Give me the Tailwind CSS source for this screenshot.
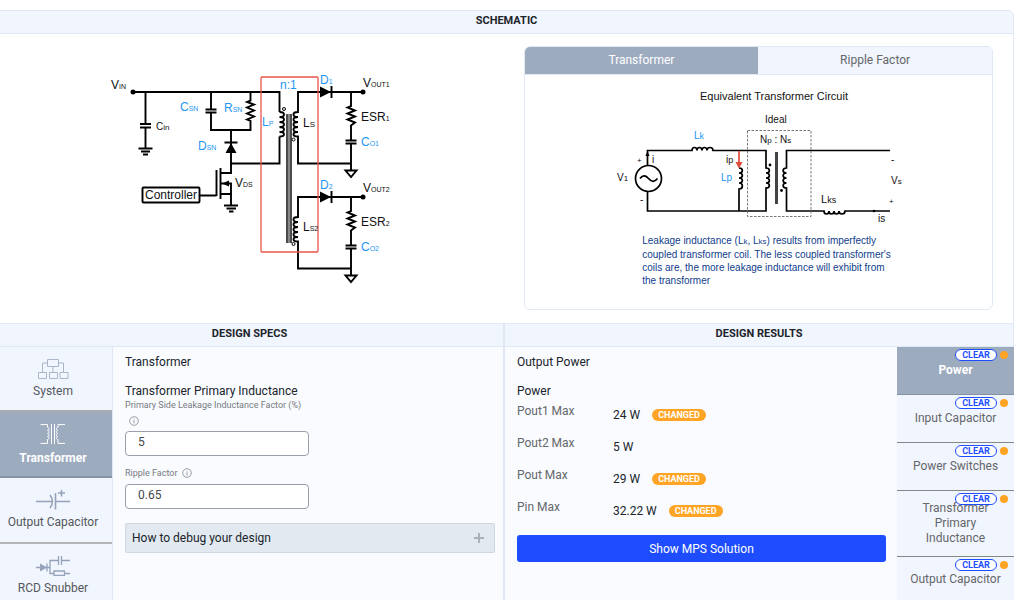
<!DOCTYPE html>
<html lang="en">

<head>
    <meta charset="UTF-8">
    <meta name="viewport" content="width=device-width, initial-scale=1.0">
    <title>Flyback Designer</title>
    <script src="https://cdn.jsdelivr.net/npm/@tailwindcss/browser@4"></script>
</head>

<body class="bg-white font-['Roboto','Liberation_Sans',sans-serif] text-xs text-[#20242b]">

<main class="flex min-h-screen flex-col pt-2.5 pr-[21px]">

    <!-- Schematic -->
    <section class="rounded-tr-md border-t border-r border-[#dfe8f4]">
        <h2 class="rounded-tr-md border-b border-[#dfe8f4] bg-[#f1f5fd] text-center text-[11px] leading-5 font-bold pb-0.5">SCHEMATIC</h2>
        <div class="grid grid-cols-2">
            <div class="flex items-center justify-center">
                <svg class="w-[302px]" viewBox="102 66 302 225" fill="none" stroke="#000" stroke-width="1.9" font-family="Liberation Sans, Arial, sans-serif">
                    <!-- input side -->
                    <path d="M133 92H279.500V112M145.500 92V124M140 124H151M140 127.500H151M145.500 128V148M138.500 148.500H152.500M141 151.500H150M143 154.500H148"/>
                    <path d="M211 92V109M205.500 109.500H216.500M205.500 112.500H216.500M211 113V130H250.500V121L247 119.500L254 116.500L247 113.500L254 110.500L247 107.500L254 104.500L247 102L250.500 100.500V92"/>
                    <path d="M231 130V173H220.500M224.500 142.500H237.500M231 163.500H279.500V136.500M220.500 168V199M216.500 170V196M199.500 195.500H216.500M221 183.500H231V205M220.500 194H231M224 205.500H238M226.500 208.500H236M229 211.500H233.500"/>
                    <path d="M231 143L236.500 153H225.500ZM222 183.500L229 180.500V186.500Z" fill="#000" stroke="none"/>
                    <rect x="142.500" y="187.500" width="57" height="15" rx="1"/>
                    <!-- windings -->
                    <path d="M279.500 112c6 0 6 5 0 5c6 0 6 5 0 5c6 0 6 5 0 5c6 0 6 5 0 5c6 0 6 4.500 0 4.500"/>
                    <path d="M320 92H298V112c-6 0 -6 5 0 5c-6 0 -6 5 0 5c-6 0 -6 5 0 5c-6 0 -6 5 0 5c-6 0 -6 4.500 0 4.500V163.500H351"/>
                    <path d="M320 197H298V217c-6 0 -6 5 0 5c-6 0 -6 5 0 5c-6 0 -6 5 0 5c-6 0 -6 5 0 5c-6 0 -6 4.500 0 4.500V268.500H351"/>
                    <path d="M289 114V243" stroke="#888" stroke-width="2"/>
                    <path d="M287 114V243M291 114V243" stroke-width="1.400"/>
                    <g stroke-width="1">
                        <circle cx="284" cy="109" r="1.500"/>
                        <circle cx="293.500" cy="139.500" r="1.500"/>
                        <circle cx="293.500" cy="244" r="1.500"/>
                    </g>
                    <!-- outputs -->
                    <g id="output">
                        <path d="M320 92H363M331.500 86V98M351 92V106L347.500 107.500L355 110.500L347.500 113.500L355 116.500L347.500 119.500L355 122.500L351 125.500V140M345.500 140.500H356.500M345.500 143.500H356.500M351 144V170M345.500 170.500H356.500L351 177Z"/>
                        <path d="M320 86.500L331 92L320 97.500Z" fill="#000" stroke="none"/>
                        <circle cx="363" cy="92" r="2.500" fill="#000" stroke="none"/>
                    </g>
                    <use href="#output" y="105"/>
                    <circle cx="133" cy="92" r="2.500" fill="#000" stroke="none"/>
                    <rect x="261" y="77" width="57" height="175" rx="1" stroke="#e8564a" stroke-width="1.300"/>

                    <g fill="#111" stroke="none" font-size="12">
                        <text x="111" y="89">V<tspan font-size="7">IN</tspan></text>
                        <text x="156" y="130" font-size="10">C<tspan font-size="8">in</tspan></text>
                        <text x="235" y="187">V<tspan font-size="7">DS</tspan></text>
                        <text x="145" y="199">Controller</text>
                        <text x="303" y="127">L<tspan font-size="8">S</tspan></text>
                        <text x="303" y="231">L<tspan font-size="7">S2</tspan></text>
                        <text x="363" y="87">V<tspan font-size="7">OUT1</tspan></text>
                        <text x="363" y="192">V<tspan font-size="7">OUT2</tspan></text>
                        <text x="361" y="121">ESR<tspan font-size="7">1</tspan></text>
                        <text x="361" y="226">ESR<tspan font-size="7">2</tspan></text>
                    </g>
                    <g fill="#1e96f5" stroke="none" font-size="12">
                        <text x="180" y="111">C<tspan font-size="7">SN</tspan></text>
                        <text x="224" y="112">R<tspan font-size="7">SN</tspan></text>
                        <text x="198" y="150">D<tspan font-size="7">SN</tspan></text>
                        <text x="262" y="126">L<tspan font-size="7">P</tspan></text>
                        <text x="280" y="89">n:1</text>
                        <text x="320" y="84">D<tspan font-size="7">1</tspan></text>
                        <text x="320" y="189">D<tspan font-size="7">2</tspan></text>
                        <text x="361" y="146">C<tspan font-size="7">O1</tspan></text>
                        <text x="361" y="251">C<tspan font-size="7">O2</tspan></text>
                    </g>
                </svg>
            </div>

            <div class="mt-3 mr-5 mb-[13px] ml-[17px] overflow-hidden rounded-md border border-[#dfe8f4]">
                <div class="grid grid-cols-2 border-b border-[#dfe8f4]" role="tablist">
                    <button role="tab" aria-selected="true" class="bg-[#9dabbf] leading-[27px] text-white">Transformer</button>
                    <button role="tab" aria-selected="false" class="bg-[#f1f5fd] leading-[27px] text-[#65676b]">Ripple Factor</button>
                </div>
                <div class="flex flex-col items-center pt-2.5 pb-[22px]">
                    <svg class="w-[300px]" viewBox="609 85 300 149" fill="none" stroke="#000" stroke-width="1.700" font-family="Liberation Sans, Arial, sans-serif">
                        <path d="M648.500 165V150.500H693c0 -4 5 -4 5 0c0 -4 5 -4 5 0c0 -4 5 -4 5 0c0 -4 6 -4 6 0H767V168c4.500 0 4.500 5 0 5c4.500 0 4.500 5 0 5c4.500 0 4.500 5 0 5c4.500 0 4.500 5 0 5V211H648.500V192"/>
                        <circle cx="649.500" cy="178.500" r="13"/>
                        <path d="M641 178.500c3 -4 6 -3 8.500 0c3 3.500 6 4 9 0"/>
                        <path d="M648.500 151L650.500 156H646.500Z" fill="#000" stroke="none"/>
                        <path d="M740 168c4.500 0 4.500 5 0 5c4.500 0 4.500 5 0 5c4.500 0 4.500 5 0 5c4.500 0 4.500 6 0 6V211"/>
                        <path d="M891 150.500H787.500V168c-4.500 0 -4.500 5 0 5c-4.500 0 -4.500 5 0 5c-4.500 0 -4.500 5 0 5c-4.500 0 -4.500 5 0 5V211H825c0 4 5 4 5 0c0 4 5 4 5 0c0 4 5 4 5 0c0 4 6 4 6 0H891"/>
                        <path d="M777.500 152V204" stroke="#444" stroke-width="3"/>
                        <path d="M740 151V164" stroke="#e04a3a"/>
                        <path d="M736.500 162H743.500L740 168.500Z" fill="#e04a3a" stroke="none"/>
                        <circle cx="771" cy="165" r="1.400" fill="#000" stroke="none"/>
                        <circle cx="782.500" cy="190.500" r="1.400" fill="#000" stroke="none"/>
                        <circle cx="875" cy="211" r="1.300" fill="#000" stroke="none"/>
                        <rect x="748.500" y="130.500" width="63.500" height="86" stroke="#777" stroke-width="1" stroke-dasharray="2.500 1.500"/>
                        <g fill="#111" stroke="none" font-size="10">
                            <text x="701" y="100" font-size="11">Equivalent Transformer Circuit</text>
                            <text x="766" y="123">Ideal</text>
                            <text x="761" y="143">N<tspan font-size="8">p</tspan> : N<tspan font-size="8">s</tspan></text>
                            <text x="618" y="181">V<tspan font-size="8">1</tspan></text>
                            <text x="638" y="163" font-size="8">+</text>
                            <text x="653" y="163">i</text>
                            <text x="641" y="203">-</text>
                            <text x="727" y="163">i<tspan font-size="9">p</tspan></text>
                            <text x="892" y="163">-</text>
                            <text x="892" y="184">V<tspan font-size="8">s</tspan></text>
                            <text x="890" y="204" font-size="8">+</text>
                            <text x="822" y="203" font-size="11">L<tspan font-size="9">ks</tspan></text>
                            <text x="879" y="222">is</text>
                        </g>
                        <g fill="#1e96f5" stroke="none" font-size="10">
                            <text x="695" y="139">L<tspan font-size="9">k</tspan></text>
                            <text x="722" y="181">L<tspan font-size="10">p</tspan></text>
                        </g>
                    </svg>
                    <p class="ml-6 w-64 font-['Liberation_Sans',sans-serif] text-[10px] leading-[13px] whitespace-nowrap text-[#10408c]">
                        Leakage inductance (L<span class="text-[8px]">k</span>, L<span class="text-[8px]">ks</span>) results from imperfectly<br>
                        coupled transformer coil. The less coupled transformer's<br>
                        coils are, the more leakage inductance will exhibit from<br>
                        the transformer
                    </p>
                </div>
            </div>
        </div>
    </section>

    <div class="grid flex-1 grid-cols-[505fr_509fr]">

        <!-- Design specs -->
        <section class="flex flex-col border-t border-r-2 border-[#dfe8f4]">
            <h2 class="border-b border-[#dfe8f4] bg-[#f1f5fd] pb-0.5 pr-1 text-center text-[11px] leading-5 font-bold">DESIGN SPECS</h2>
            <div class="flex flex-1 bg-[#f9fbff]">
                <nav class="w-[113px] shrink-0 border-r border-[#dfe8f4] bg-[#f1f5fd] text-[#55585d]">
                    <a href="#" class="flex h-[65px] flex-col items-center border-b-2 border-[#a9abb0] pt-3 pr-1.5">
                        <svg class="h-5 w-8" viewBox="0 0 32 20" fill="none" stroke="#aab7ca">
                            <path d="M10.500 .5h11v7h-11zM1.500 13.500h8v6h-8zM12.500 13.500h8v6h-8zM23 13.500h8v6h-8zM16 7.500v6M10.500 4H5.500v9.500M21.500 4H26.500v9.500"/>
                        </svg>
                        <span class="mt-1">System</span>
                    </a>
                    <a href="#" class="flex h-[66px] flex-col items-center border-b-2 border-[#8492a8] bg-[#9dabbf] pt-3 pr-1.5 font-bold text-white">
                        <svg class="h-5 w-8" viewBox="0 0 32 20" fill="none" stroke="#fff">
                            <path d="M3.500 .6H10.500v2.800c2.200 0 2.200 3 0 3c2.200 0 2.200 3 0 3c2.200 0 2.200 3 0 3c2.200 0 2.200 3 0 3v4H3.500M28 .6H21v2.800c-2.200 0 -2.200 3 0 3c-2.200 0 -2.200 3 0 3c-2.200 0 -2.200 3 0 3c-2.200 0 -2.200 3 0 3v4H28M14.500 0V20M17.500 0V20"/>
                        </svg>
                        <span class="mt-1.5">Transformer</span>
                    </a>
                    <a href="#" class="flex h-[66px] flex-col items-center border-b-2 border-[#b2b4b8] pt-3 pr-1.5">
                        <svg class="h-5 w-[34px]" viewBox="0 0 34 20" fill="none" stroke="#94a3ba" stroke-width="1.600">
                            <path d="M0 11.500H16.500M19.500 11.500H34M19.500 3V19.500M14 5c3 4 3 9 0 13M22 3H29M25.500 0V6.500"/>
                        </svg>
                        <span class="mt-1">Output Capacitor</span>
                    </a>
                    <a href="#" class="flex h-[66px] flex-col items-center pt-3 pr-1.5">
                        <svg class="h-5 w-[34px]" viewBox="0 0 34 20" fill="none" stroke="#94a3ba" stroke-width="1.300">
                            <path d="M0 11.500H14M11 7.500V15.500M18 17.500H14V4.500H22.500M25.500 4.500H34M22.500 0V9M25.500 0V9M18 15H28.500V19.500H18ZM28.500 17.500H34"/>
                            <path d="M4 7.500L11 11.500L4 15.500Z" fill="#94a3ba" stroke="none"/>
                        </svg>
                        <span class="mt-1">RCD Snubber</span>
                    </a>
                </nav>

                <form class="flex-1 pt-[7px] pr-2 pl-3">
                    <h3>Transformer</h3>
                    <h4 class="mt-[13px]">Transformer Primary Inductance</h4>
                    <label for="leakage" class="block text-[9px] leading-3 text-[#777a80]">Primary Side Leakage Inductance Factor (%)</label>
                    <svg class="mt-[5px] ml-1 block size-2.5" viewBox="0 0 10 10" fill="none" stroke="#85888e" stroke-width=".8">
                        <circle cx="5" cy="5" r="4.300"/>
                        <path d="M5 4.200V7.500M5 2.500V3.400"/>
                    </svg>
                    <input id="leakage" type="text" value="5" class="mt-[5px] block h-[25px] w-[184px] rounded border border-[#999fab] bg-white px-3 pb-1 text-[#45484e]">
                    <div class="mt-[11px] flex items-center gap-1 text-[9px] leading-3 text-[#777a80]">
                        <label for="ripple">Ripple Factor</label>
                        <svg class="size-2.5" viewBox="0 0 10 10" fill="none" stroke="#85888e" stroke-width=".8">
                            <circle cx="5" cy="5" r="4.300"/>
                            <path d="M5 4.200V7.500M5 2.500V3.400"/>
                        </svg>
                    </div>
                    <input id="ripple" type="text" value="0.65" class="mt-[5px] block h-[25px] w-[184px] rounded border border-[#999fab] bg-white px-3 pb-1 text-[#45484e]">
                    <button type="button" class="mt-3.5 flex h-[30px] w-full items-center justify-between rounded-xs border border-[#cfd7e0] bg-[#e2e9f0] px-1.5 pr-2.5">
                        How to debug your design
                        <svg class="size-2.5" viewBox="0 0 10 10" stroke="#a9b1bb" stroke-width="2"><path d="M0 5H10M5 0V10"/></svg>
                    </button>
                </form>
            </div>
        </section>

        <!-- Design results -->
        <section class="flex flex-col border-t border-[#dfe8f4]">
            <h2 class="border-r border-b border-[#dfe8f4] bg-[#f1f5fd] pb-0.5 text-center text-[11px] leading-5 font-bold">DESIGN RESULTS</h2>
            <div class="flex flex-1 bg-[#f9fbff]">
                <div class="flex-1 pt-[7px] pr-[11px] pl-3">
                    <h3>Output Power</h3>
                    <h4 class="mt-[13px]">Power</h4>
                    <table class="w-full text-left">
                        <tr class="h-8 align-top">
                            <th class="w-24 pt-1 font-normal text-[#65676b]">Pout1 Max</th>
                            <td class="pt-2"><div class="flex items-center gap-3">24 W <span class="h-3 rounded-full bg-[#ffa424] px-1.5 text-[9px] leading-3 font-bold text-white">CHANGED</span></div></td>
                        </tr>
                        <tr class="h-8 align-top">
                            <th class="pt-1 font-normal text-[#65676b]">Pout2 Max</th>
                            <td class="pt-2">5 W</td>
                        </tr>
                        <tr class="h-8 align-top">
                            <th class="pt-1 font-normal text-[#65676b]">Pout Max</th>
                            <td class="pt-2"><div class="flex items-center gap-3">29 W <span class="h-3 rounded-full bg-[#ffa424] px-1.5 text-[9px] leading-3 font-bold text-white">CHANGED</span></div></td>
                        </tr>
                        <tr class="h-8 align-top">
                            <th class="pt-1 font-normal text-[#65676b]">Pin Max</th>
                            <td class="pt-2"><div class="flex items-center gap-3">32.22 W <span class="h-3 rounded-full bg-[#ffa424] px-1.5 text-[9px] leading-3 font-bold text-white">CHANGED</span></div></td>
                        </tr>
                    </table>
                    <button type="button" class="mt-2 h-[27px] w-full rounded-[3px] bg-[#1d4dff] text-white">Show MPS Solution</button>
                </div>

                <nav class="w-[117px] shrink-0 bg-[#f1f5fd] text-center leading-[15px] text-[#65676b]">
                    <div class="relative flex min-h-12 items-center justify-center border-b border-[#8492a8] bg-[#9dabbf] px-3 font-bold text-white">
                        <a href="#">Power</a>
                        <button type="button" class="absolute top-0.5 right-[17px] h-3 w-[42px] rounded-full border border-[#1d4dff] bg-white text-[9px] leading-[9px] font-bold text-[#1d4dff]">CLEAR</button>
                        <span class="absolute top-1 right-1.5 size-2 rounded-full bg-[#ffa424]"></span>
                    </div>
                    <div class="relative flex min-h-12 items-center justify-center border-b border-[#858789] px-3">
                        <a href="#">Input Capacitor</a>
                        <button type="button" class="absolute top-0.5 right-[17px] h-3 w-[42px] rounded-full border border-[#1d4dff] bg-white text-[9px] leading-[9px] font-bold text-[#1d4dff]">CLEAR</button>
                        <span class="absolute top-1 right-1.5 size-2 rounded-full bg-[#ffa424]"></span>
                    </div>
                    <div class="relative flex min-h-12 items-center justify-center border-b border-[#858789] px-3">
                        <a href="#">Power Switches</a>
                        <button type="button" class="absolute top-0.5 right-[17px] h-3 w-[42px] rounded-full border border-[#1d4dff] bg-white text-[9px] leading-[9px] font-bold text-[#1d4dff]">CLEAR</button>
                        <span class="absolute top-1 right-1.5 size-2 rounded-full bg-[#ffa424]"></span>
                    </div>
                    <div class="relative flex min-h-12 items-center justify-center border-b border-[#858789] px-3 py-2.5">
                        <a href="#">Transformer Primary Inductance</a>
                        <button type="button" class="absolute top-0.5 right-[17px] h-3 w-[42px] rounded-full border border-[#1d4dff] bg-white text-[9px] leading-[9px] font-bold text-[#1d4dff]">CLEAR</button>
                        <span class="absolute top-1 right-1.5 size-2 rounded-full bg-[#ffa424]"></span>
                    </div>
                    <div class="relative flex min-h-11 items-center justify-center px-3">
                        <a href="#">Output Capacitor</a>
                        <button type="button" class="absolute top-0.5 right-[17px] h-3 w-[42px] rounded-full border border-[#1d4dff] bg-white text-[9px] leading-[9px] font-bold text-[#1d4dff]">CLEAR</button>
                        <span class="absolute top-1 right-1.5 size-2 rounded-full bg-[#ffa424]"></span>
                    </div>
                </nav>
            </div>
        </section>
    </div>
</main>

</body>
</html>
